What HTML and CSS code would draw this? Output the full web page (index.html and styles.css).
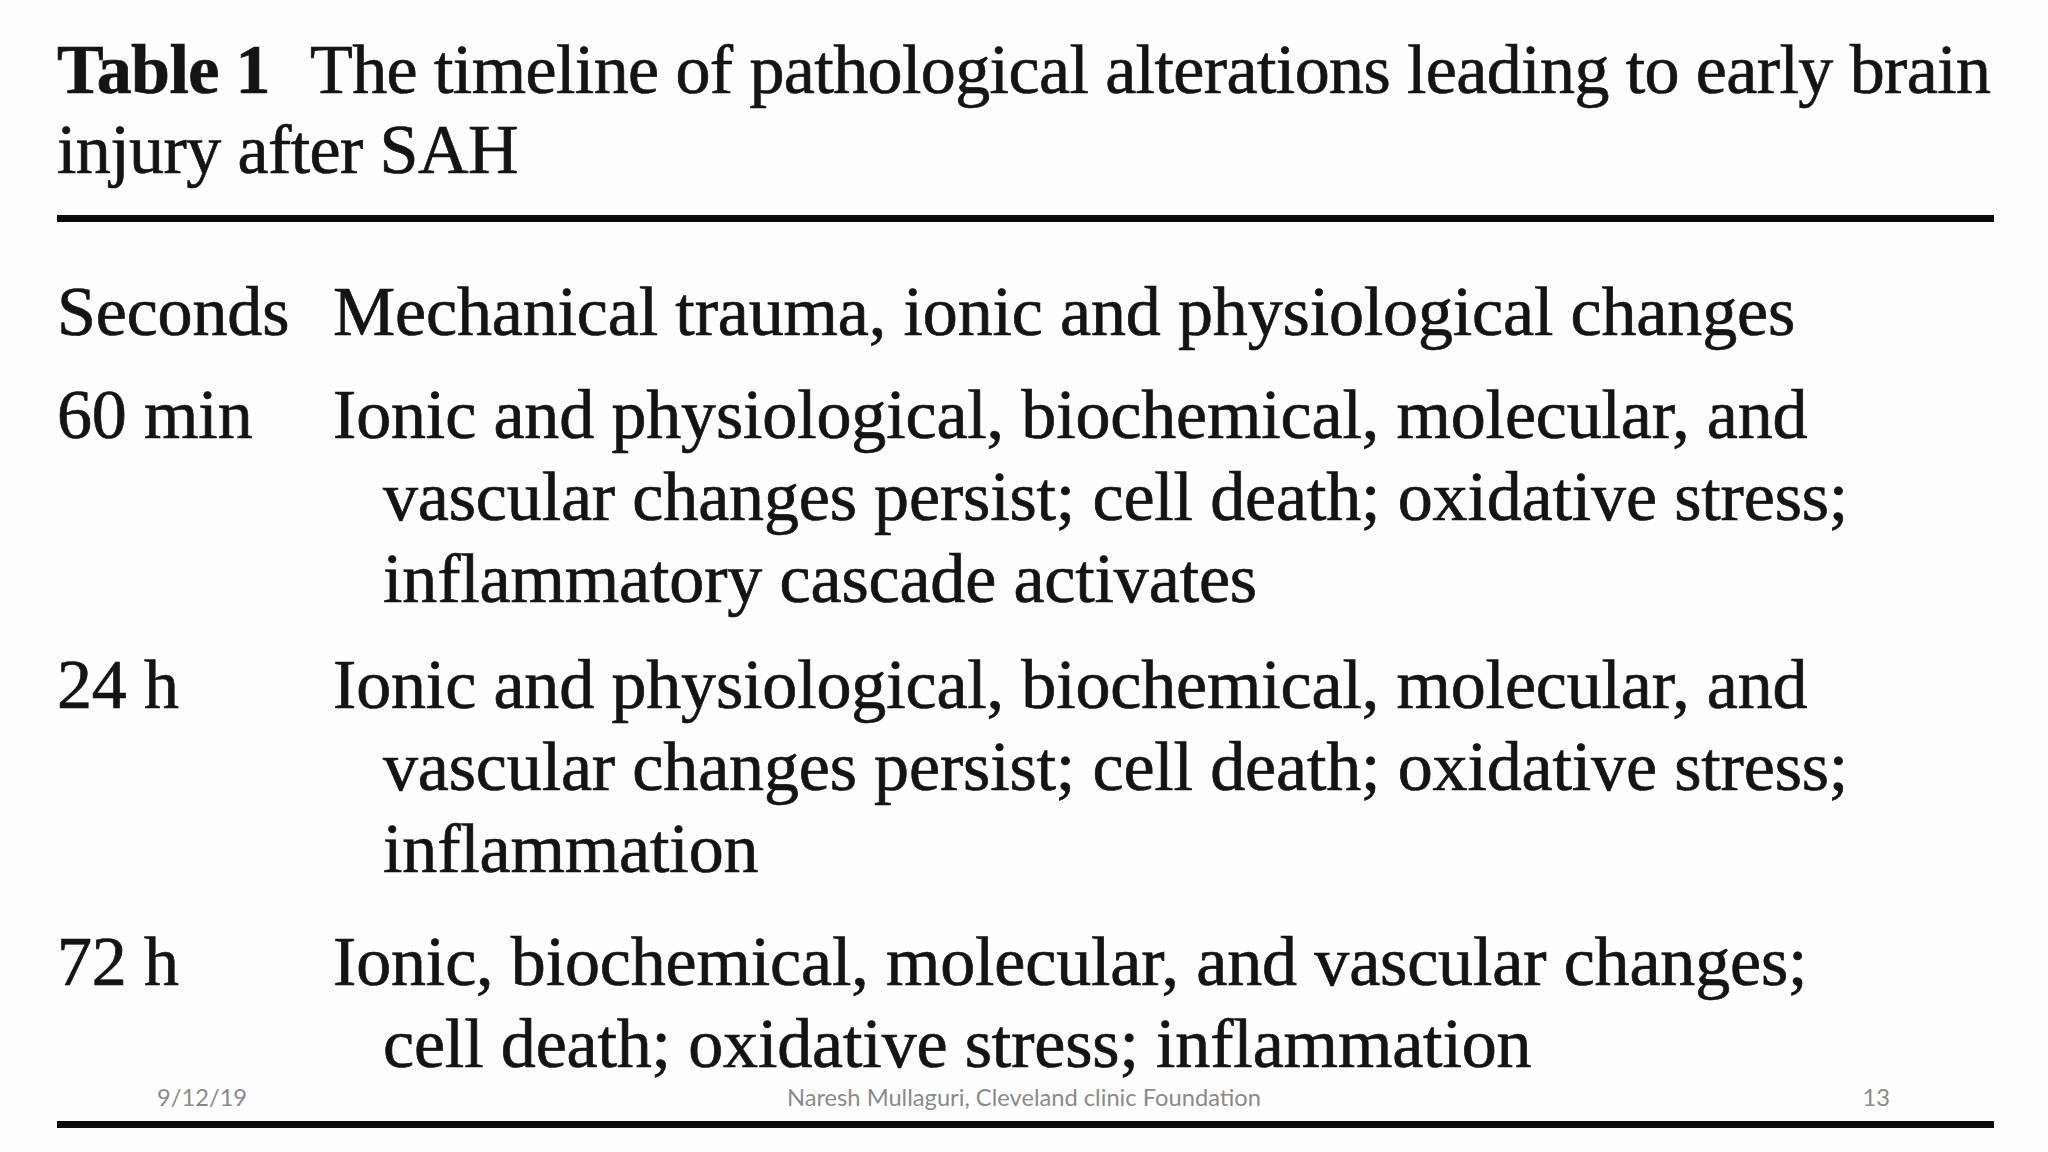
FILE: index.html
```html
<!DOCTYPE html>
<html lang="en">
<head>
<meta charset="utf-8">
<title>Table 1 – timeline of early brain injury after SAH</title>
<link rel="stylesheet" href="styles.css">
</head>
<body>
<main class="slide">
  <section class="table">
    <h1 class="caption"><span class="label">Table 1</span>The timeline of pathological alterations leading to early brain<br>injury after SAH</h1>
    <div class="rule rule-top"></div>
    <div class="rows">
      <div class="row r1">
        <div class="time">Seconds</div>
        <div class="desc">Mechanical trauma, ionic and physiological changes</div>
      </div>
      <div class="row r2">
        <div class="time">60 min</div>
        <div class="desc">Ionic and physiological, biochemical, molecular, and<br>vascular changes persist; cell death; oxidative stress;<br>inflammatory cascade activates</div>
      </div>
      <div class="row r3">
        <div class="time">24 h</div>
        <div class="desc">Ionic and physiological, biochemical, molecular, and<br>vascular changes persist; cell death; oxidative stress;<br>inflammation</div>
      </div>
      <div class="row r4">
        <div class="time">72 h</div>
        <div class="desc">Ionic, biochemical, molecular, and vascular changes;<br>cell death; oxidative stress; inflammation</div>
      </div>
    </div>
    <div class="rule rule-bottom"></div>
  </section>
  <footer class="footer">
    <div class="f-date">9/12/19</div>
    <div class="f-center">Naresh Mullaguri, Cleveland clinic Foundation</div>
    <div class="f-num">13</div>
  </footer>
</main>
</body>
</html>
```

FILE: styles.css
```css
html, body {
  margin: 0;
  padding: 0;
  background: #fdfdfd;
}

.slide {
  position: relative;
  width: 2048px;
  height: 1152px;
  overflow: hidden;
  background: #fdfdfd;
}

.table {
  width: 1937px;
  margin-left: 57px;
  padding-top: 30px;
  font-family: "Liberation Serif", "Times New Roman", serif;
  color: #141414;
  -webkit-text-stroke: 0.7px #141414;
}

.caption {
  margin: 0;
  font-size: 70px;
  font-weight: normal;
  line-height: 80px;
  letter-spacing: -0.6px;
}

.label {
  font-weight: bold;
  margin-right: 40px;
}

.rule {
  height: 7px;
  background: #0a0a0a;
}

.rule-top {
  margin-top: 25px;
}

.rows {
  margin-top: 49px;
  display: flex;
  flex-direction: column;
}

.row {
  display: grid;
  grid-template-columns: 276px 1fr;
  font-size: 70px;
  line-height: 82px;
  letter-spacing: -0.15px;
}

.r2 { margin-top: 21px; }
.r3 { margin-top: 24px; }
.r4 { margin-top: 31px; }

.desc {
  padding-left: 50px;
  text-indent: -50px;
}

.rule-bottom {
  margin-top: 36px;
}

.footer {
  position: absolute;
  left: 0;
  top: 1080px;
  width: 2048px;
  height: 36px;
  font-family: Lato, "Open Sans", sans-serif;
  font-size: 23.7px;
  color: #8a8a8a;
}

.f-date {
  position: absolute;
  left: 157px;
  top: 3px;
}

.f-center {
  position: absolute;
  left: 0;
  right: 0;
  top: 3px;
  text-align: center;
}

.f-num {
  position: absolute;
  right: 158px;
  top: 3px;
}
```
